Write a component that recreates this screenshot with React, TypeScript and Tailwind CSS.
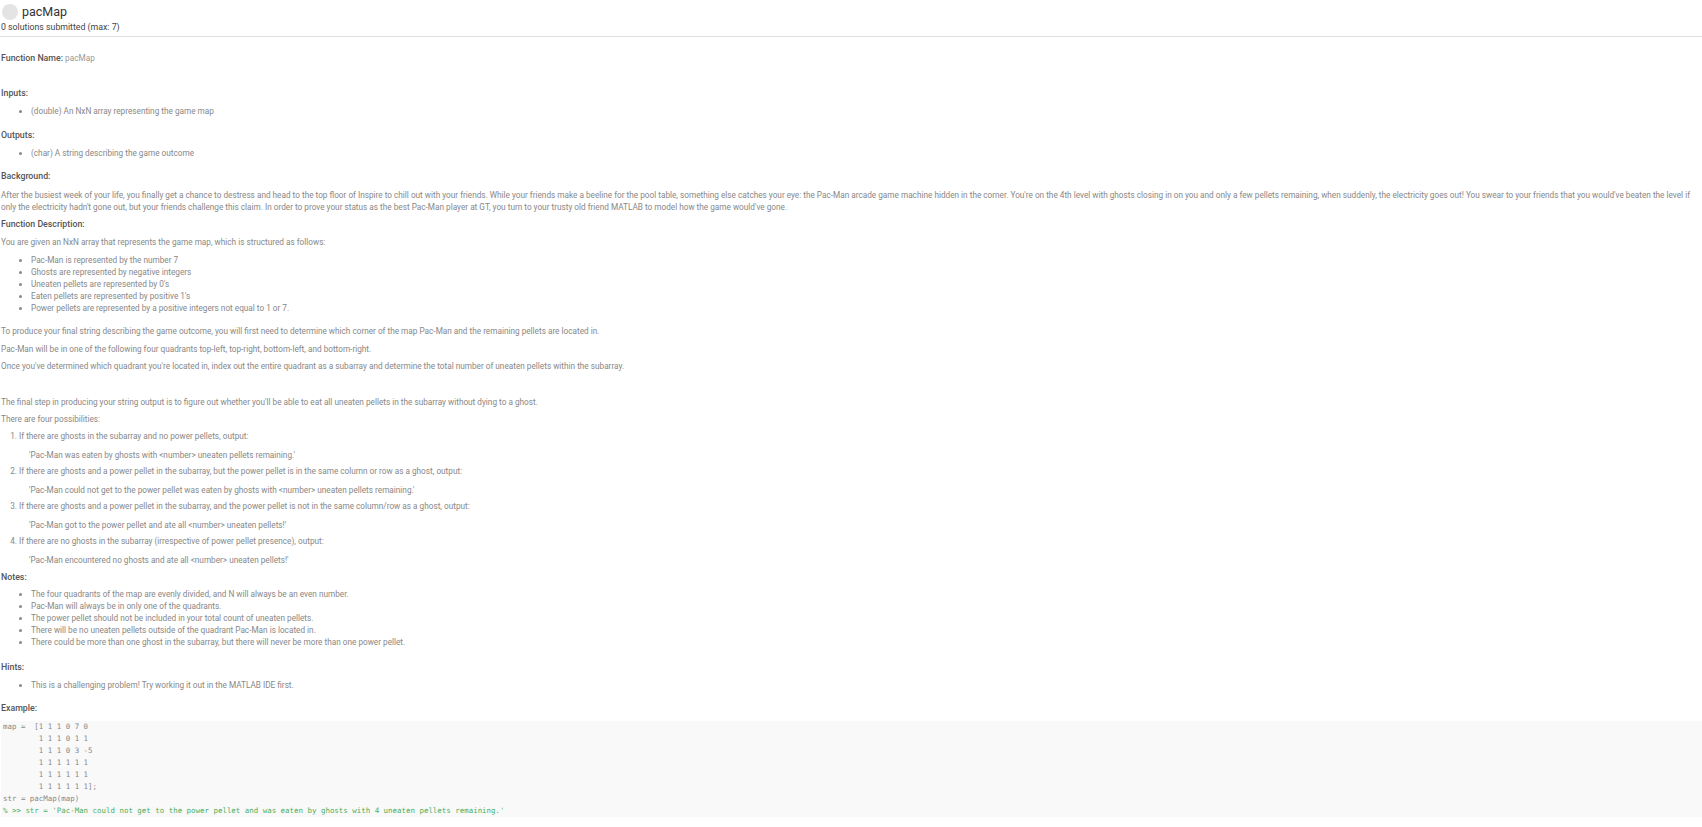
const bodyText = "text-[8.22px] leading-[12px] text-[#888]";

function Heading({ children }: { children: React.ReactNode }) {
  return <p className="text-[8.8px] leading-[12px] font-medium text-[#555]">{children}</p>;
}

function Bullets({ items }: { items: string[] }) {
  return (
    <ul className={`list-disc pl-[30px] ${bodyText}`}>
      {items.map((item) => (
        <li key={item}>{item}</li>
      ))}
    </ul>
  );
}

const outcomes = [
  ["If there are ghosts in the subarray and no power pellets, output:", "'Pac-Man was eaten by ghosts with <number> uneaten pellets remaining.'"],
  ["If there are ghosts and a power pellet in the subarray, but the power pellet is in the same column or row as a ghost, output:", "'Pac-Man could not get to the power pellet was eaten by ghosts with <number> uneaten pellets remaining.'"],
  ["If there are ghosts and a power pellet in the subarray, and the power pellet is not in the same column/row as a ghost, output:", "'Pac-Man got to the power pellet and ate all <number> uneaten pellets!'"],
  ["If there are no ghosts in the subarray (irrespective of power pellet presence), output:", "'Pac-Man encountered no ghosts and ate all <number> uneaten pellets!'"],
];

export default function App() {
  return (
    <div className="min-h-[827px] overflow-hidden bg-white font-['Roboto',Arial,sans-serif]">
      <header className="border-b border-[#e0e0e0] pl-[2px] pt-[2px] h-[37px]">
        <div className="flex items-center gap-[4px] h-[19px]">
          <span className="h-[16px] w-[16px] rounded-full bg-[#e4e4e4]" />
          <h1 className="text-[12.5px] leading-[19px] text-[#333]">pacMap</h1>
        </div>
        <p className="text-[8.75px] leading-[12px] text-[#444] -ml-[1px]">0 solutions submitted (max: 7)</p>
      </header>

      <main className="pl-[1px]">
        <div className="mt-[15px]">
          <p className="text-[8.22px] leading-[12px] text-[#999]">
            <span className="text-[8.8px] font-medium text-[#555]">Function Name:</span> pacMap
          </p>
        </div>

        <div className="mt-[23px]"><Heading>Inputs:</Heading></div>
        <div className="mt-[6px]">
          <Bullets items={["(double) An NxN array representing the game map"]} />
        </div>

        <div className="mt-[12px]"><Heading>Outputs:</Heading></div>
        <div className="mt-[6px]">
          <Bullets items={["(char) A string describing the game outcome"]} />
        </div>

        <div className="mt-[11px]"><Heading>Background:</Heading></div>
        <p className={`mt-[7px] pr-[5px] ${bodyText}`}>
          After the busiest week of your life, you finally get a chance to destress and head to the top floor of Inspire to chill out with your friends. While your friends make a beeline for the pool table, something else catches your eye: the Pac-Man arcade game machine hidden in the corner. You're on the 4th level with ghosts closing in on you and only a few pellets remaining, when suddenly, the electricity goes out! You swear to your friends that you would've beaten the level if only the electricity hadn't gone out, but your friends challenge this claim. In order to prove your status as the best Pac-Man player at GT, you turn to your trusty old friend MATLAB to model how the game would've gone.
        </p>

        <div className="mt-[5px]"><Heading>Function Description:</Heading></div>
        <p className={`mt-[6px] ${bodyText}`}>You are given an NxN array that represents the game map, which is structured as follows:</p>
        <div className="mt-[6px]">
          <Bullets
            items={[
              "Pac-Man is represented by the number 7",
              "Ghosts are represented by negative integers",
              "Uneaten pellets are represented by 0's",
              "Eaten pellets are represented by positive 1's",
              "Power pellets are represented by a positive integers not equal to 1 or 7.",
            ]}
          />
        </div>

        <p className={`mt-[11px] ${bodyText}`}>To produce your final string describing the game outcome, you will first need to determine which corner of the map Pac-Man and the remaining pellets are located in.</p>
        <p className={`mt-[6px] ${bodyText}`}>Pac-Man will be in one of the following four quadrants top-left, top-right, bottom-left, and bottom-right.</p>
        <p className={`mt-[5px] ${bodyText}`}>Once you've determined which quadrant you're located in, index out the entire quadrant as a subarray and determine the total number of uneaten pellets within the subarray.</p>
        <p className={`mt-[24px] ${bodyText}`}>The final step in producing your string output is to figure out whether you'll be able to eat all uneaten pellets in the subarray without dying to a ghost.</p>
        <p className={`mt-[5px] ${bodyText}`}>There are four possibilities:</p>

        <ol className={`mt-[5px] list-decimal pl-[18px] ${bodyText}`}>
          {outcomes.map(([rule, quote]) => (
            <li key={rule} className="mb-[4px]">
              {rule}
              <p className="mt-[7px] pl-[10px]">{quote}</p>
            </li>
          ))}
        </ol>

        <div className="mt-[5px]"><Heading>Notes:</Heading></div>
        <div className="mt-[5px]">
          <Bullets
            items={[
              "The four quadrants of the map are evenly divided, and N will always be an even number.",
              "Pac-Man will always be in only one of the quadrants.",
              "The power pellet should not be included in your total count of uneaten pellets.",
              "There will be no uneaten pellets outside of the quadrant Pac-Man is located in.",
              "There could be more than one ghost in the subarray, but there will never be more than one power pellet.",
            ]}
          />
        </div>

        <div className="mt-[13px]"><Heading>Hints:</Heading></div>
        <div className="mt-[6px]">
          <Bullets items={["This is a challenging problem! Try working it out in the MATLAB IDE first."]} />
        </div>

        <div className="mt-[11px]"><Heading>Example:</Heading></div>
        <pre className="mt-[7px] bg-[#f9f9f9] pl-[2px] font-['DejaVu_Sans_Mono',monospace] text-[7.45px] leading-[12px] text-[#888]">
          {`map =  [1 1 1 0 7 0
        1 1 1 0 1 1
        1 1 1 0 3 -5
        1 1 1 1 1 1
        1 1 1 1 1 1
        1 1 1 1 1 1];
str = pacMap(map)
`}
          <span className="text-[#4caf60]">{`% >> str = 'Pac-Man could not get to the power pellet and was eaten by ghosts with 4 uneaten pellets remaining.'`}</span>
        </pre>
      </main>
    </div>
  );
}
